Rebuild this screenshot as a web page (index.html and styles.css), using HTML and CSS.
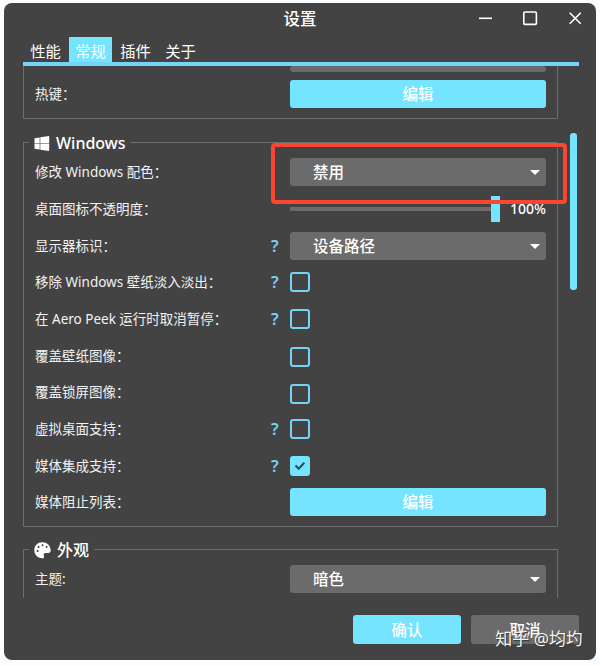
FILE: index.html
```html
<!DOCTYPE html>
<html lang="zh-CN">
<head>
<meta charset="utf-8">
<title>设置</title>
<link rel="stylesheet" href="styles.css">
</head>
<body>
<main class="window">
  <header class="titlebar">
    <h1 class="title">设置</h1>
    <div class="controls">
      <svg width="16" height="16" viewBox="0 0 16 16"><path d="M2 8.3h13"/></svg>
      <svg width="16" height="16" viewBox="0 0 16 16"><rect x="1.8" y="2" width="12.6" height="12.4" rx="1"/></svg>
      <svg width="16" height="16" viewBox="0 0 16 16"><path d="M2.7 2.7l11 11M13.7 2.7l-11 11"/></svg>
    </div>
  </header>
  <nav class="tabs">
    <span class="tab">性能</span><span class="tab active">常规</span><span class="tab">插件</span><span class="tab">关于</span>
  </nav>
  <div class="viewport">
    <div class="sections">
      <section class="group group-first">
        <div class="row row-cut"><div class="select"></div></div>
        <div class="row"><span class="label">热键：</span><span class="help"></span><button class="button">编辑</button></div>
      </section>
      <section class="group group-windows">
        <h2 class="legend"><svg class="icon-win" width="16" height="15" viewBox="0 0 16 15"><path d="M.5 2.2L5.7 1.4V7.2H.5zM6.3 1.3L15.2 0V7.2H6.3zM.5 7.8H5.7V13.6L.5 12.8zM6.3 7.8H15.2V15L6.3 13.7z"/></svg>Windows</h2>
        <div class="row"><span class="label">修改 Windows 配色：</span><span class="help"></span><div class="select marked">禁用</div></div>
        <div class="row"><span class="label">桌面图标不透明度：</span><span class="help"></span><div class="slider"><div class="track"></div><div class="thumb"></div><span class="value">100%</span></div></div>
        <div class="row"><span class="label">显示器标识：</span><span class="help">?</span><div class="select">设备路径</div></div>
        <div class="row"><span class="label">移除 Windows 壁纸淡入淡出：</span><span class="help">?</span><span class="check"></span></div>
        <div class="row"><span class="label">在 Aero Peek 运行时取消暂停：</span><span class="help">?</span><span class="check"></span></div>
        <div class="row"><span class="label">覆盖壁纸图像：</span><span class="help"></span><span class="check low"></span></div>
        <div class="row"><span class="label">覆盖锁屏图像：</span><span class="help"></span><span class="check low"></span></div>
        <div class="row"><span class="label">虚拟桌面支持：</span><span class="help">?</span><span class="check"></span></div>
        <div class="row"><span class="label">媒体集成支持：</span><span class="help">?</span><span class="check checked"><svg width="12" height="10" viewBox="0 0 12 10"><path d="M1.5 4.5L4.7 7.8L10.3 1.8"/></svg></span></div>
        <div class="row"><span class="label">媒体阻止列表：</span><span class="help"></span><button class="button">编辑</button></div>
      </section>
      <section class="group group-look">
        <h2 class="legend"><svg class="icon-palette" width="17" height="17" viewBox="0 0 17 17"><path class="fill" d="M8.3.3C3.7.3.3 3.8.3 8.3c0 4.6 3.7 8 8 8 1.6 0 2.1-1.2 1.6-2.4-.7-1.7.2-3 2-3h2.4c1.5 0 2.4-1 2.4-2.4C16.700 3.700 12.900.3 8.300.3z"/><g class="hole"><circle cx="3.600" cy="9" r="1"/><circle cx="4.600" cy="5" r="1"/><circle cx="8.500" cy="3.300" r="1"/><circle cx="12.600" cy="5" r="1"/></g></svg>外观</h2>
        <div class="row"><span class="label">主题:</span><span class="help"></span><div class="select">暗色</div></div>
      </section>
    </div>
    <div class="scrollbar"></div>
  </div>
  <footer class="footer">
    <button class="button">确认</button>
    <button class="button cancel">取消</button>
  </footer>
  <div class="watermark">知乎 @均圴</div>
</main>
</body>
</html>
```

FILE: styles.css
```css
* { box-sizing: border-box; }
body {
  margin: 0;
  height: 665px;
  padding: 3px 4px 5px;
  overflow: hidden;
  background: #fcfdff;
  color: #fff;
  font-family: "Noto Sans", "Noto Sans CJK SC", sans-serif;
  font-size: 13.5px;
}
.window {
  position: relative;
  display: flex;
  flex-direction: column;
  height: 657px;
  width: 592px;
  background: #434343;
  border-radius: 8px;
}
.titlebar {
  display: grid;
  grid-template-columns: 1fr auto;
  height: 34px;
  position: relative;
}
.title {
  grid-area: 1 / 1 / 2 / 3;
  margin: 0;
  text-align: center;
  font-size: 16.5px;
  font-weight: 500;
  line-height: 32px;
}
.controls {
  grid-area: 1 / 2;
  display: flex;
  gap: 29px;
  padding: 7px 13px 0 0;
}
.controls svg { fill: none; stroke: #fff; stroke-width: 1.6; }
.tabs {
  display: flex;
  flex: none;
  height: 29px;
  margin: 0 17px 0 19px;
  border-bottom: 4px solid #75d3fa;
}
.tab {
  width: 45px;
  height: 25px;
  line-height: 29px;
  text-align: center;
  font-size: 15.3px;
}
.tab.active { width: 43px; margin: 0 1px; background: #74e4ff; }
.viewport {
  display: flex;
  flex: none;
  height: 532px;
  margin-left: 19px;
  overflow: hidden;
}
.sections { width: 535px; }
.scrollbar {
  width: 7px;
  height: 157px;
  margin: 67px 0 0 12px;
  border-radius: 3px;
  background: #74e4ff;
}
.group {
  position: relative;
  border: 1px solid #6c6d6c;
  padding: 11px 11px 5px;
}
.group-first { border-top: 0; height: 53px; padding: 0 11px; margin-bottom: 23px; }
.row {
  display: grid;
  grid-template-columns: 232px 23px 256px;
  align-items: center;
  height: 36.67px;
}
.row-cut { height: 10px; grid-template-columns: 256px; justify-content: end; }
.row-cut .select { height: 6px; align-self: start; }
.row-cut .select::after { display: none; }
.group-windows { height: 385px; margin-bottom: 22px; }
.group-look { height: 60px; }
.label { white-space: nowrap; line-height: 20px; color: #f2f2f2; }
.help { color: #75d3fa; font-size: 16.5px; font-weight: 600; line-height: 20px; padding-left: 4px; }
.legend {
  position: absolute;
  left: 5px;
  top: -13px;
  display: flex;
  align-items: center;
  gap: 6px;
  height: 26px;
  margin: 0;
  padding: 0 5px;
  background: #434343;
  font-size: 16px;
  font-weight: 500;
  line-height: 26px;
}
.icon-win, .fill { fill: #fff; }
.hole { fill: #434343; }
.select, .button {
  height: 28px;
  border: 0;
  border-radius: 3px;
  font: 500 15.5px/28px "Noto Sans", "Noto Sans CJK SC", sans-serif;
  color: #fff;
}
.select {
  position: relative;
  padding-left: 23px;
  background: #6b6b6b;
}
.select::after {
  content: "";
  position: absolute;
  right: 6px;
  top: 12px;
  border: 5px solid transparent;
  border-top-color: #fff;
  border-bottom: 0;
}
.marked::before {
  content: "";
  position: absolute;
  left: -19px;
  top: -15px;
  width: 288px;
  height: 53px;
  border: 4px solid #fc4632;
  border-radius: 4px;
}
.button { padding: 0; text-align: center; background: #74e4ff; }
.slider { display: flex; align-items: center; height: 28px; }
.track { width: 201px; height: 4px; background: #6b6b6b; }
.thumb { width: 9px; height: 26px; background: #74e4ff; }
.value { width: 46px; text-align: right; font-size: 14px; font-weight: 500; line-height: 20px; }
.check {
  display: grid;
  place-items: center;
  width: 20px;
  height: 20px;
  border: 2px solid #75d3fa;
  border-radius: 3px;
}
.low { margin-top: 3px; }
.checked { background: #74e4ff; border-color: #74e4ff; }
.checked path { fill: none; stroke: #2d4a56; stroke-width: 2; }
.footer {
  display: flex;
  justify-content: flex-end;
  gap: 10px;
  padding: 17px 17px 0 0;
}
.footer .button { width: 108px; height: 29px; }
.footer .cancel { background: #6b6b6b; }
.watermark {
  position: absolute;
  right: 13px;
  bottom: 8px;
  font-size: 17px;
  line-height: 26px;
  color: #f4f4f4;
  text-shadow: 1px 1px 1px #333;
}
```
